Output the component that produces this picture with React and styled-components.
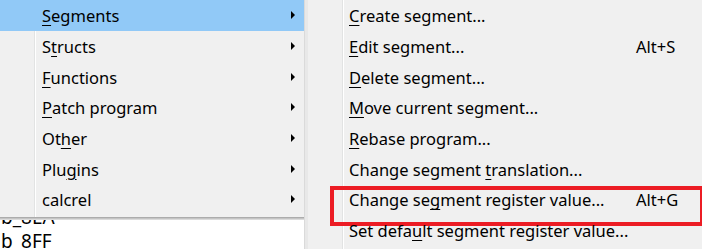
import React from 'react'
import styled, { createGlobalStyle } from 'styled-components'

const GlobalStyle = createGlobalStyle`
  html, body {
    margin: 0;
    padding: 0;
    background: #ffffff;
    overflow: hidden;
  }
  * { box-sizing: border-box; }
`;

const leftItems = [
  { before: '', key: 'S', after: 'egments', active: true },
  { before: 'S', key: 't', after: 'ructs' },
  { before: '', key: 'F', after: 'unctions' },
  { before: '', key: 'P', after: 'atch program' },
  { before: 'Ot', key: 'h', after: 'er' },
  { before: 'Plu', key: 'g', after: 'ins' },
  { before: 'calcrel', key: '', after: '' },
];

const rightItems = [
  { before: '', key: 'C', after: 'reate segment...' },
  { before: '', key: 'E', after: 'dit segment...', shortcut: 'Alt+S' },
  { before: '', key: 'D', after: 'elete segment...' },
  { before: '', key: 'M', after: 'ove current segment...' },
  { before: '', key: 'R', after: 'ebase program...' },
  { before: 'Change segment ', key: 't', after: 'ranslation...' },
  { before: 'Change se', key: 'g', after: 'ment register value...', shortcut: 'Alt+G', marked: true },
  { before: 'Set defa', key: 'u', after: 'lt segment register value...' },
];

function Label({ item }) {
  return (
    <span>
      {item.before}
      {item.key && <Key>{item.key}</Key>}
      {item.after}
    </span>
  );
}

export default function App() {
  return (
    <>
      <GlobalStyle />
      <Stage>
        <LeftPane>
          <Menu>
            {leftItems.map((item, i) => (
              <LeftRow key={i} $active={item.active}>
                <Label item={item} />
                <Arrow />
              </LeftRow>
            ))}
          </Menu>
          <Shadow />
          <Listing>
            <ListingInner>
              <Line>b_8EA</Line>
              <Line>b_8FF</Line>
            </ListingInner>
          </Listing>
        </LeftPane>

        <SubMenu>
          {rightItems.map((item, i) => (
            <RightRow key={i} $marked={item.marked}>
              <Label item={item} />
              <Shortcut>{item.shortcut}</Shortcut>
            </RightRow>
          ))}
        </SubMenu>
      </Stage>
    </>
  );
}

const Stage = styled.div`
  width: 702px;
  height: 249px;
  display: flex;
  font-family: "Noto Sans", "Open Sans", sans-serif;
  font-size: 16.5px;
  color: #000;
`;

const LeftPane = styled.div`
  width: 305px;
  display: flex;
  flex-direction: column;
  border-right: 1px solid #dadada;
`;

const Menu = styled.div`
  background: #f0f0f0;
  padding-bottom: 2px;
  background-image: linear-gradient(to right, transparent 34px, #e2e3e3 34px, #e2e3e3 35px, #ffffff 35px, #ffffff 36px, transparent 36px);
`;

const LeftRow = styled.div`
  height: 30.7px;
  display: flex;
  align-items: center;
  justify-content: space-between;
  padding-left: 42px;
  padding-right: 9px;
  padding-top: 1px;
  background: ${p => (p.$active ? '#91c9f7' : 'transparent')};
`;

const Key = styled.span`
  text-decoration: underline;
  text-underline-offset: 3px;
  text-decoration-thickness: 1px;
`;

const Arrow = styled.span`
  width: 0;
  height: 0;
  margin-bottom: 1px;
  border-top: 4px solid transparent;
  border-bottom: 4px solid transparent;
  border-left: 4px solid #000;
`;

const Shadow = styled.div`
  height: 3px;
  background: linear-gradient(to bottom, #a0a0a0, #c4c4c4 50%, #e6e6e6);
`;

const Listing = styled.div`
  flex: 1;
  overflow: hidden;
  background: #fff;
`;

const ListingInner = styled.div`
  margin-top: -15px;
  padding-left: 1px;
`;

const Line = styled.div`
  line-height: 24px;
  font-size: 19px;
`;

const SubMenu = styled.div`
  flex: 1;
  background: #f0f0f0;
  border-left: 3px solid #e8e8e8;
  background-image: linear-gradient(to right, transparent 34px, #e2e3e3 34px, #e2e3e3 35px, #ffffff 35px, #ffffff 36px, transparent 36px);
`;

const RightRow = styled.div`
  position: relative;
  height: 30.7px;
  display: flex;
  align-items: center;
  padding-left: 41px;
  padding-top: 1px;

  & > span:first-child {
    width: 287px;
  }

  ${p => p.$marked && `
    &::after {
      content: '';
      position: absolute;
      left: 22px;
      right: -2px;
      top: 2px;
      height: 32px;
      border: 4px solid #ec1c24;
    }
  `}
`;

const Shortcut = styled.span`
  white-space: nowrap;
`;
